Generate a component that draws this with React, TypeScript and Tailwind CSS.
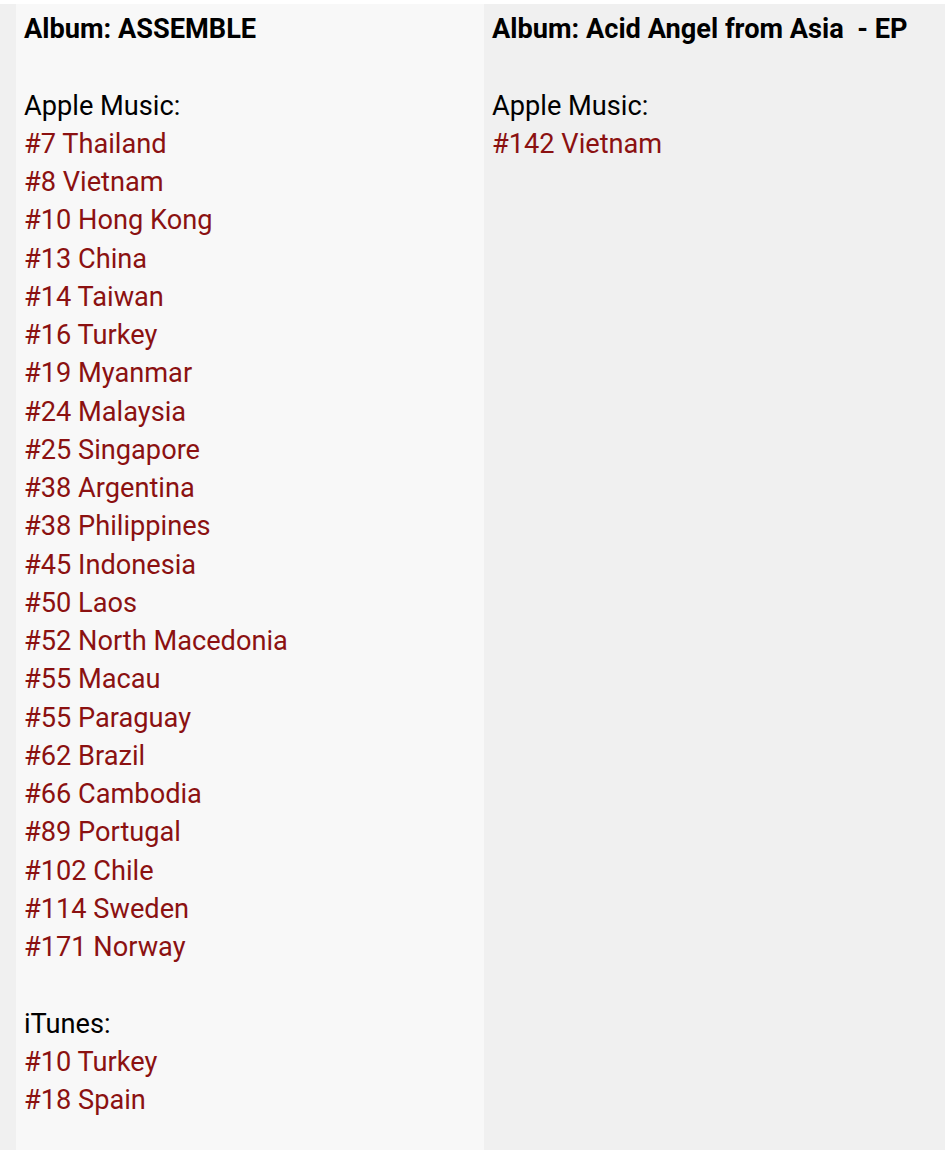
const assemble = [
  "#7 Thailand",
  "#8 Vietnam",
  "#10 Hong Kong",
  "#13 China",
  "#14 Taiwan",
  "#16 Turkey",
  "#19 Myanmar",
  "#24 Malaysia",
  "#25 Singapore",
  "#38 Argentina",
  "#38 Philippines",
  "#45 Indonesia",
  "#50 Laos",
  "#52 North Macedonia",
  "#55 Macau",
  "#55 Paraguay",
  "#62 Brazil",
  "#66 Cambodia",
  "#89 Portugal",
  "#102 Chile",
  "#114 Sweden",
  "#171 Norway",
];

const itunes = ["#10 Turkey", "#18 Spain"];

function Rank({ label }: { label: string }) {
  return <div className="text-[#8b1111]">{label}</div>;
}

export default function App() {
  return (
    <div className="min-h-[1150px] bg-white pt-[4px] font-['Roboto',sans-serif] text-[27.2px] leading-[38.25px] text-black">
      <div className="flex w-[945px] min-h-[1146px] bg-[#f0f0f0] pl-[16px]">
        <div className="w-[468px] bg-[#f8f8f8] px-[8px] pt-[6px]">
          <div className="font-bold">Album: ASSEMBLE</div>
          <div>&nbsp;</div>
          <div>Apple Music:</div>
          {assemble.map((r) => (
            <Rank key={r} label={r} />
          ))}
          <div>&nbsp;</div>
          <div>iTunes:</div>
          {itunes.map((r) => (
            <Rank key={r} label={r} />
          ))}
        </div>
        <div className="flex-1 px-[8px] pt-[6px]">
          <div className="font-bold whitespace-pre">Album: Acid Angel from Asia  - EP</div>
          <div>&nbsp;</div>
          <div>Apple Music:</div>
          <Rank label="#142 Vietnam" />
        </div>
      </div>
    </div>
  );
}
